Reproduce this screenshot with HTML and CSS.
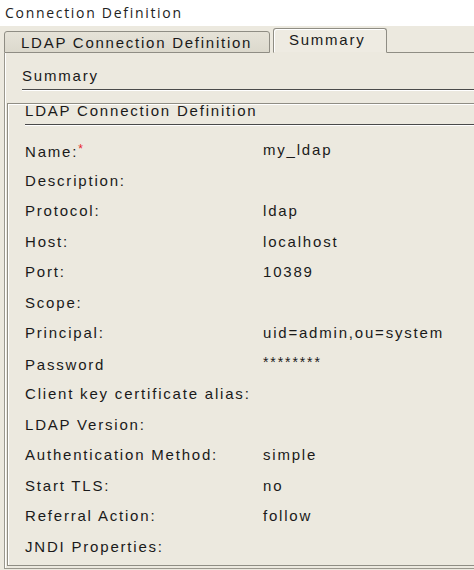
FILE: index.html
```html
<!DOCTYPE html>
<html>
<head>
<meta charset="utf-8">
<link rel="stylesheet" href="styles.css">
</head>
<body>
<div class="title">Connection Definition</div>
<div class="window">
  <div class="tabs">
    <div class="tab">LDAP Connection Definition</div>
    <div class="tab active">Summary</div>
    <div class="tab-fill"></div>
  </div>
  <div class="panel">
    <div class="section-head">Summary</div>
    <div class="groupbox">
      <div class="group-title">LDAP Connection Definition</div>
      <div class="rows">
        <div class="label">Name:<span class="req">*</span></div><div class="value">my_ldap</div>
        <div class="label">Description:</div><div class="value"></div>
        <div class="label">Protocol:</div><div class="value">ldap</div>
        <div class="label">Host:</div><div class="value">localhost</div>
        <div class="label">Port:</div><div class="value">10389</div>
        <div class="label">Scope:</div><div class="value"></div>
        <div class="label">Principal:</div><div class="value">uid=admin,ou=system</div>
        <div class="label pw">Password</div><div class="value pwv">********</div>
        <div class="label">Client key certificate alias:</div><div class="value"></div>
        <div class="label">LDAP Version:</div><div class="value"></div>
        <div class="label">Authentication Method:</div><div class="value">simple</div>
        <div class="label">Start TLS:</div><div class="value">no</div>
        <div class="label">Referral Action:</div><div class="value">follow</div>
        <div class="label">JNDI Properties:</div><div class="value"></div>
      </div>
    </div>
  </div>
</div>
</body>
</html>
```
FILE: styles.css
```css
html, body {
  margin: 0;
  padding: 0;
  background: #ffffff;
  overflow: hidden;
}

.title {
  height: 26px;
  line-height: 25px;
  padding-left: 5px;
  font-family: "Open Sans", "Liberation Sans", sans-serif;
  font-size: 14px;
  letter-spacing: 1.7px;
  color: #222222;
  background: #ffffff;
}

.window {
  background: #ece9df;
  padding: 2px 0 0 4px;
  height: 544px;
  font-family: "Liberation Sans", Arial, sans-serif;
  font-size: 15px;
  letter-spacing: 1.8px;
  color: #1a1a1a;
}

.tabs {
  display: flex;
  align-items: flex-end;
  height: 25px;
}

.tab {
  box-sizing: border-box;
  height: 22px;
  width: 266px;
  padding-left: 16px;
  line-height: 21px;
  border: 1px solid #8f8d84;
  border-radius: 3px 3px 0 0;
  background: linear-gradient(#e6e3d8, #dcd9cd);
  letter-spacing: 1.75px;
  white-space: nowrap;
}

.tab.active {
  width: 114px;
  height: 25px;
  margin-left: 3px;
  padding-left: 15px;
  line-height: 22px;
  border-bottom: 1px solid #ece9df;
  background: #eeebe2;
  box-shadow: inset 1px 1px 0 #ffffff;
}

.tab-fill {
  flex: 1;
  border-bottom: 1px solid #8f8d84;
}

.panel {
  border-left: 1px solid #9a988e;
  border-bottom: 1px solid #9a988e;
  box-shadow: inset 1px 0 0 #ffffff;
  padding: 0 0 2px 2px;
}

.section-head {
  margin-left: 15px;
  height: 36px;
  line-height: 46px;
  border-bottom: 1px solid #4a4a4a;
  box-shadow: 0 1px 0 #ffffff;
}

.groupbox {
  margin-top: 13px;
  border: 1px solid #8f8d84;
  border-right: none;
  box-shadow: inset 1px 1px 0 #ffffff;
  padding-bottom: 3px;
}

.group-title {
  margin-left: 17px;
  height: 20px;
  line-height: 13px;
  border-bottom: 1px solid #4a4a4a;
  box-shadow: 0 1px 0 #ffffff;
  white-space: nowrap;
}

.rows {
  display: grid;
  grid-template-columns: 238px 1fr;
  grid-auto-rows: 30.5px;
  align-items: center;
  padding: 10px 0 0 17px;
}

.label, .value {
  white-space: nowrap;
  line-height: 18px;
}

.req {
  color: #e8262a;
  font-size: 12px;
  vertical-align: 4px;
  letter-spacing: 0;
}

.label.pw {
  position: relative;
  top: 1px;
}

.value.pwv {
  font-size: 14px;
  letter-spacing: 1.9px;
  position: relative;
  top: -2px;
}
```
